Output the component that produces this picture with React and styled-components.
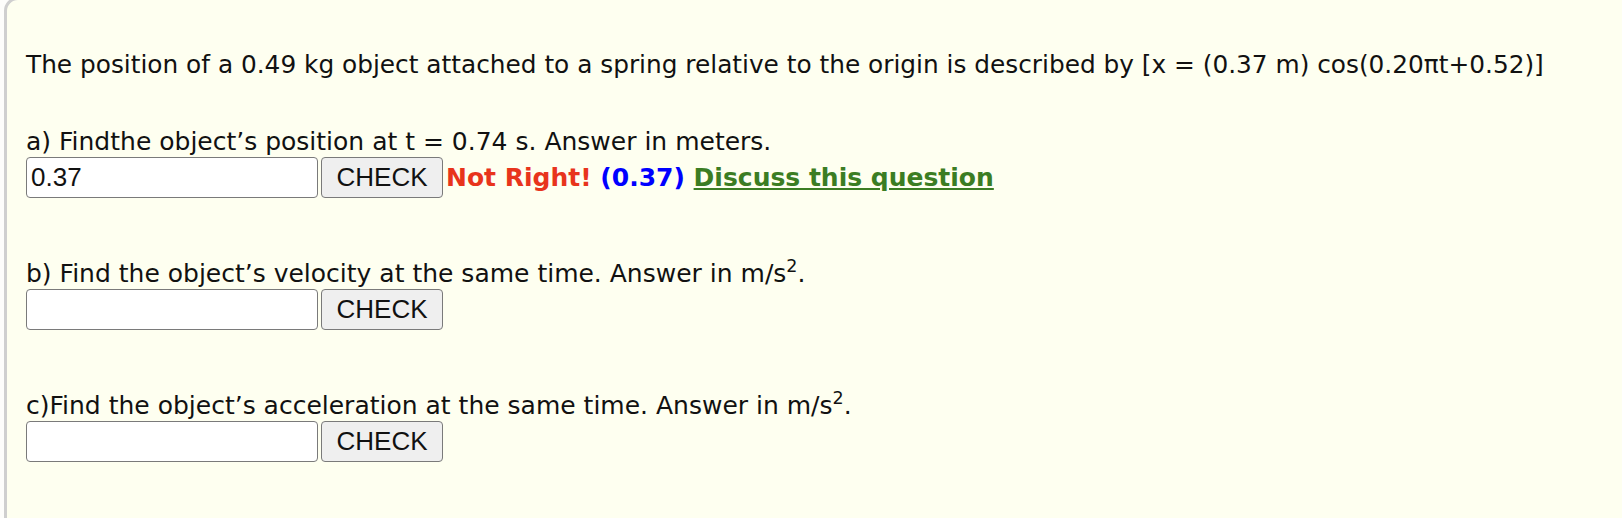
import React from "react";
import styled, { createGlobalStyle } from "styled-components";

const ivory = "#fefff0";
const ink = "#111";
const textFont = `"DejaVu Sans", Verdana, sans-serif`;
const formFont = `"Liberation Sans", Arial, sans-serif`;

const GlobalStyle = createGlobalStyle`
  html, body {
    margin: 0;
    padding: 0;
    background: #fdfdfb;
    overflow: hidden;
  }
`;

const Card = styled.div`
  margin: -3px -40px 0 4px;
  min-height: 540px;
  background: ${ivory};
  border: 3px solid #cfcfcf;
  border-radius: 14px;
  padding: 50px 0 0 19px;
  font-family: ${textFont};
  font-size: 25px;
  line-height: 29px;
  color: ${ink};
  display: flex;
  flex-direction: column;
  align-items: flex-start;
`;

const Prompt = styled.p`
  margin: 0 0 48px;
  font-size: 24.8px;
  white-space: nowrap;
`;

const Question = styled.div`
  display: flex;
  flex-direction: column;
  align-items: flex-start;
  margin-bottom: 61px;
`;

const Label = styled.div`
  white-space: nowrap;
  margin-bottom: 1px;

  sup {
    font-size: 0.7em;
    line-height: 0;
    vertical-align: 0.55em;
  }
`;

const Row = styled.div`
  display: flex;
  align-items: center;
  gap: 3px;
  height: 41px;
`;

const Input = styled.input`
  box-sizing: border-box;
  width: 292px;
  height: 41px;
  border: 1px solid #7a7a7a;
  border-radius: 4px;
  background: #fff;
  padding: 0 4px;
  font-family: ${formFont};
  font-size: 26px;
  color: ${ink};
`;

const CheckButton = styled.button`
  box-sizing: border-box;
  width: 122px;
  height: 41px;
  border: 1px solid #7a7a7a;
  border-radius: 4px;
  background: #efefef;
  font-family: ${formFont};
  font-size: 26px;
  color: ${ink};
  padding: 0;
`;

const Result = styled.span`
  font-family: ${textFont};
  font-weight: bold;
  font-size: 25px;
  white-space: pre;
`;

const Feedback = styled.span`
  color: ${(p) => p.color};
`;

const Discuss = styled.a`
  color: #3b7d23;
  text-decoration: underline;
`;

const questions = [
  {
    id: "a",
    label: <>a) Findthe object’s position at t = 0.74 s. Answer in meters.</>,
    value: "0.37",
    feedback: true,
  },
  {
    id: "b",
    label: (
      <>
        b) Find the object’s velocity at the same time. Answer in m/s<sup>2</sup>.
      </>
    ),
    value: "",
  },
  {
    id: "c",
    label: (
      <>
        c)Find the object’s acceleration at the same time. Answer in m/s<sup>2</sup>.
      </>
    ),
    value: "",
  },
];

const App = () => (
  <>
    <GlobalStyle />
    <Card>
      <Prompt>
        The position of a 0.49 kg object attached to a spring relative to the
        origin is described by [x = (0.37 m) cos(0.20πt+0.52)]
      </Prompt>
      {questions.map((q) => (
        <Question key={q.id}>
          <Label>{q.label}</Label>
          <Row>
            <Input defaultValue={q.value} />
            <CheckButton>CHECK</CheckButton>
            {q.feedback && (
              <Result>
                <Feedback color="#e8341c">Not Right!</Feedback>{" "}
                <Feedback color="#0000ff">(0.37)</Feedback>{" "}
                <Discuss href="#">Discuss this question</Discuss>
              </Result>
            )}
          </Row>
        </Question>
      ))}
    </Card>
  </>
);

export default App;
